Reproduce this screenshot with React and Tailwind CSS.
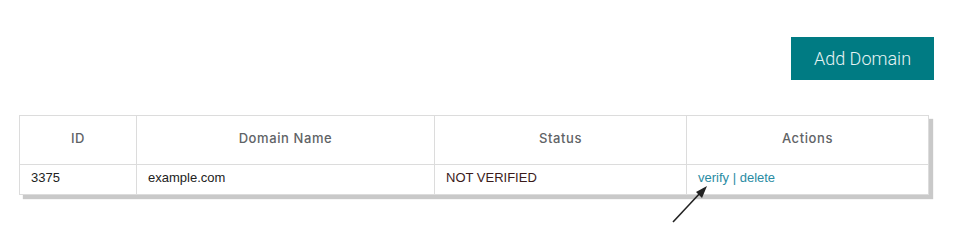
import React from "react";

export default function App() {
  return (
    <div className="relative w-[961px] h-[240px] bg-white" style={{ fontFamily: "'Liberation Sans', Arial, sans-serif" }}>
      <div className="flex justify-end pt-[37px] pr-[27px]">
        <button className="w-[143px] h-[43px] bg-[#007b83] text-[#e6f3f3] text-[18px] font-light pb-[1px]" style={{ fontFamily: "Roboto, 'Liberation Sans', sans-serif" }}>
          Add Domain
        </button>
      </div>
      <div className="ml-[19px] mt-[35px] w-[910px] shadow-[4px_4px_1px_#c9c9c9]">
        <table className="w-full border-collapse border border-[#dcdcdc] table-fixed">
          <colgroup>
            <col className="w-[117px]" />
            <col className="w-[298px]" />
            <col className="w-[252px]" />
            <col />
          </colgroup>
          <thead>
            <tr className="h-[49px]">
              {["ID", "Domain Name", "Status", "Actions"].map((h) => (
                <th key={h} className="border border-[#dcdcdc] text-center text-[13px] font-medium text-[#5f6366] tracking-[0.6px] pb-[2px]" style={{ fontFamily: "Inter, 'Liberation Sans', sans-serif" }}>
                  {h}
                </th>
              ))}
            </tr>
          </thead>
          <tbody>
            <tr className="h-[30px] text-[13px] text-[#222]">
              <td className="border border-[#dcdcdc] pl-[11px] pb-[3px]">3375</td>
              <td className="border border-[#dcdcdc] pl-[11px] pb-[3px]">example.com</td>
              <td className="border border-[#dcdcdc] pl-[11px] pb-[3px] text-[#3a1a1a]">NOT VERIFIED</td>
              <td className="border border-[#dcdcdc] pl-[11px] pb-[3px] text-[#2a8ca3]">
                verify <span>|</span> delete
              </td>
            </tr>
          </tbody>
        </table>
      </div>
      <svg className="absolute left-[668px] top-[182px]" width="44" height="46" viewBox="0 0 44 46">
        <line x1="5" y1="40" x2="34" y2="9" stroke="#222" strokeWidth="1.6" />
        <polygon points="39,4 28,10 34,16" fill="#222" />
      </svg>
    </div>
  );
}
